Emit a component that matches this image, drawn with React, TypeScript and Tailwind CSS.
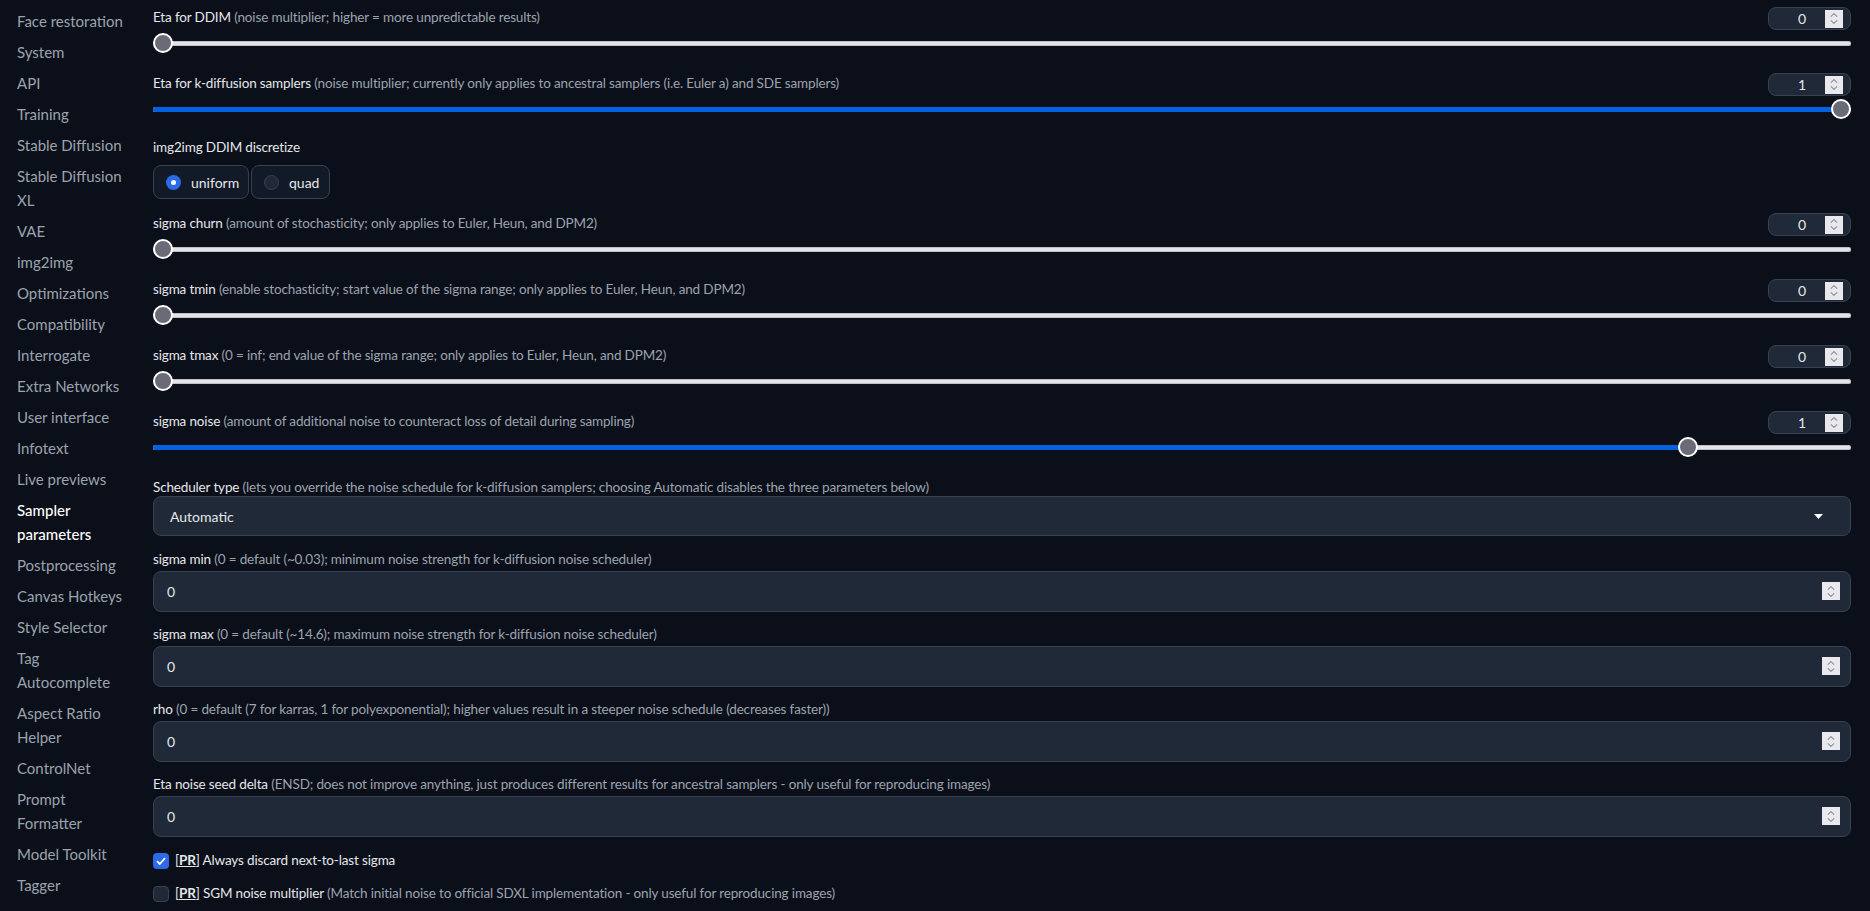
import React from "react";

const FONT = { fontFamily: "Lato, 'Noto Sans', 'Liberation Sans', sans-serif" };

function Spinner({ className = "" }: { className?: string }) {
  return (
    <div className={"flex h-[18px] w-[18px] flex-col items-center justify-center gap-[3px] bg-[#e9e9ed] " + className}>
      <svg width="8" height="4" viewBox="0 0 8 4" fill="none">
        <path d="M0.8 3.6 L4 0.6 L7.2 3.6" stroke="#8f8f9d" strokeWidth="1.1" />
      </svg>
      <svg width="8" height="4" viewBox="0 0 8 4" fill="none">
        <path d="M0.8 0.4 L4 3.4 L7.2 0.4" stroke="#8f8f9d" strokeWidth="1.1" />
      </svg>
    </div>
  );
}

function Label({ main, info }: { main: string; info?: string }) {
  return (
    <span className="whitespace-nowrap text-[13.5px] tracking-[-0.15px] text-[#e5e7eb]">
      {main}
      {info ? <span className="text-[#9ca3af]"> {info}</span> : null}
    </span>
  );
}

function SliderBlock({ main, info, value, pct, className = "" }: { main: string; info: string; value: string; pct: number; className?: string }) {
  return (
    <div className={"flex flex-col " + className}>
      <div className="flex h-[23px] items-center justify-between">
        <div className="-mt-[6px]">
          <Label main={main} info={info} />
        </div>
        <div className="flex h-[23px] w-[83px] items-center rounded-[8px] border border-[#374151] bg-[#1f2937] pr-[7px]">
          <div className="flex-1 pl-[10px] text-center text-[14px] text-[#e5e7eb]">{value}</div>
          <Spinner />
        </div>
      </div>
      <div className="relative mt-[2px] h-[22px]">
        <div className="absolute left-0 right-0 top-[8.5px] h-[5px] rounded-full bg-[#e4e4e8] shadow-[inset_0_0_0_0.5px_#9a9aa6]" />
        <div
          className="absolute left-0 top-[8.5px] h-[5px] rounded-l-full bg-[#0461df]"
          style={{ width: `calc(10px + ${pct} * (100% - 20px))` }}
        />
        <div
          className="absolute top-[1px] h-[20px] w-[20px] -translate-x-1/2 rounded-full border-[2px] border-white bg-[#6b6b78]"
          style={{ left: `calc(10px + ${pct} * (100% - 20px))` }}
        />
      </div>
    </div>
  );
}

function InputBlock({ main, info, className = "" }: { main: string; info: string; className?: string }) {
  return (
    <div className={"flex flex-col " + className}>
      <div className="flex h-[20px] items-center">
        <Label main={main} info={info} />
      </div>
      <div className="mt-[1.5px] flex h-[41px] items-center rounded-[8px] border border-[#374151] bg-[#1f2937] pl-[13px] pr-[10px]">
        <div className="flex-1 text-[14px] text-[#e5e7eb]">0</div>
        <Spinner />
      </div>
    </div>
  );
}

const sidebar: { lines: string[]; active?: boolean }[] = [
  { lines: ["Face restoration"] },
  { lines: ["System"] },
  { lines: ["API"] },
  { lines: ["Training"] },
  { lines: ["Stable Diffusion"] },
  { lines: ["Stable Diffusion", "XL"] },
  { lines: ["VAE"] },
  { lines: ["img2img"] },
  { lines: ["Optimizations"] },
  { lines: ["Compatibility"] },
  { lines: ["Interrogate"] },
  { lines: ["Extra Networks"] },
  { lines: ["User interface"] },
  { lines: ["Infotext"] },
  { lines: ["Live previews"] },
  { lines: ["Sampler", "parameters"], active: true },
  { lines: ["Postprocessing"] },
  { lines: ["Canvas Hotkeys"] },
  { lines: ["Style Selector"] },
  { lines: ["Tag", "Autocomplete"] },
  { lines: ["Aspect Ratio", "Helper"] },
  { lines: ["ControlNet"] },
  { lines: ["Prompt", "Formatter"] },
  { lines: ["Model Toolkit"] },
  { lines: ["Tagger"] },
  { lines: ["Infinite image", "browsing"] },
];

export default function App() {
  return (
    <div className="flex h-[911px] w-full overflow-hidden bg-[#0b0f19]" style={FONT}>
      <div className="flex w-[153px] shrink-0 flex-col gap-[7px] pl-[17px] pt-[8.5px]">
        {sidebar.map((it, i) => (
          <div
            key={i}
            className={
              "whitespace-nowrap text-[15px] leading-6 " +
              (it.active ? "font-medium text-white" : "text-[#9ca3af]")
            }
          >
            {it.lines.map((l, j) => (
              <div key={j}>{l}</div>
            ))}
          </div>
        ))}
      </div>

      <div className="flex min-w-0 flex-1 flex-col pr-[19px] pt-[7px]">
        <SliderBlock main="Eta for DDIM" info="(noise multiplier; higher = more unpredictable results)" value="0" pct={0} />
        <SliderBlock
          className="mt-[19px]"
          main="Eta for k-diffusion samplers"
          info="(noise multiplier; currently only applies to ancestral samplers (i.e. Euler a) and SDE samplers)"
          value="1"
          pct={1}
        />

        <div className="mt-[17px] flex h-[20px] items-center">
          <Label main="img2img DDIM discretize" />
        </div>
        <div className="mt-[8px] flex gap-[2px]">
          <div className="flex h-[34px] w-[96px] items-center gap-[10px] rounded-[8px] border border-[#374151] bg-[#131a27] pl-[12px]">
            <div className="flex h-[15px] w-[15px] items-center justify-center rounded-full bg-[#2a6be8]">
              <div className="h-[5px] w-[5px] rounded-full bg-white" />
            </div>
            <span className="text-[14px] text-[#e5e7eb]">uniform</span>
          </div>
          <div className="flex h-[34px] w-[79px] items-center gap-[10px] rounded-[8px] border border-[#374151] bg-[#131a27] pl-[12px]">
            <div className="h-[15px] w-[15px] rounded-full border border-[#374151] bg-[#1f2937]" />
            <span className="text-[14px] text-[#e5e7eb]">quad</span>
          </div>
        </div>

        <SliderBlock
          className="mt-[14px]"
          main="sigma churn"
          info="(amount of stochasticity; only applies to Euler, Heun, and DPM2)"
          value="0"
          pct={0}
        />
        <SliderBlock
          className="mt-[19px]"
          main="sigma tmin"
          info="(enable stochasticity; start value of the sigma range; only applies to Euler, Heun, and DPM2)"
          value="0"
          pct={0}
        />
        <SliderBlock
          className="mt-[19px]"
          main="sigma tmax"
          info="(0 = inf; end value of the sigma range; only applies to Euler, Heun, and DPM2)"
          value="0"
          pct={0}
        />
        <SliderBlock
          className="mt-[19px]"
          main="sigma noise"
          info="(amount of additional noise to counteract loss of detail during sampling)"
          value="1"
          pct={1 / 1.1}
        />

        <div className="mt-[20px] flex h-[18px] items-center">
          <Label
            main="Scheduler type"
            info="(lets you override the noise schedule for k-diffusion samplers; choosing Automatic disables the three parameters below)"
          />
        </div>
        <div className="flex h-[40px] items-center rounded-[8px] border border-[#374151] bg-[#1f2937] pl-[16px] pr-[27px]">
          <div className="flex-1 text-[14px] text-[#e5e7eb]">Automatic</div>
          <svg width="9" height="5" viewBox="0 0 9 5">
            <path d="M0 0 L9 0 L4.5 5 Z" fill="#ffffff" />
          </svg>
        </div>

        <InputBlock
          className="mt-[13px]"
          main="sigma min"
          info="(0 = default (~0.03); minimum noise strength for k-diffusion noise scheduler)"
        />
        <InputBlock
          className="mt-[12.5px]"
          main="sigma max"
          info="(0 = default (~14.6); maximum noise strength for k-diffusion noise scheduler)"
        />
        <InputBlock
          className="mt-[12.5px]"
          main="rho"
          info="(0 = default (7 for karras, 1 for polyexponential); higher values result in a steeper noise schedule (decreases faster))"
        />
        <InputBlock
          className="mt-[12.5px]"
          main="Eta noise seed delta"
          info="(ENSD; does not improve anything, just produces different results for ancestral samplers - only useful for reproducing images)"
        />

        <div className="mt-[14px] flex h-[20px] items-center gap-[6px]">
          <div className="flex h-[16px] w-[16px] items-center justify-center rounded-[4px] bg-[#2f6ae6]">
            <svg width="10" height="8" viewBox="0 0 10 8" fill="none">
              <path d="M1 4.2 L3.8 7 L9 1" stroke="white" strokeWidth="1.8" />
            </svg>
          </div>
          <span className="whitespace-nowrap text-[13.5px] tracking-[-0.15px] text-[#e5e7eb]">
            [<span className="font-bold underline">PR</span>] Always discard next-to-last sigma
          </span>
        </div>
        <div className="mt-[13px] flex h-[20px] items-center gap-[6px]">
          <div className="h-[16px] w-[16px] rounded-[4px] border border-[#374151] bg-[#1f2937]" />
          <span className="whitespace-nowrap text-[13.5px] tracking-[-0.15px] text-[#e5e7eb]">
            [<span className="font-bold underline">PR</span>] SGM noise multiplier{" "}
            <span className="text-[#9ca3af]">(Match initial noise to official SDXL implementation - only useful for reproducing images)</span>
          </span>
        </div>
      </div>
    </div>
  );
}
